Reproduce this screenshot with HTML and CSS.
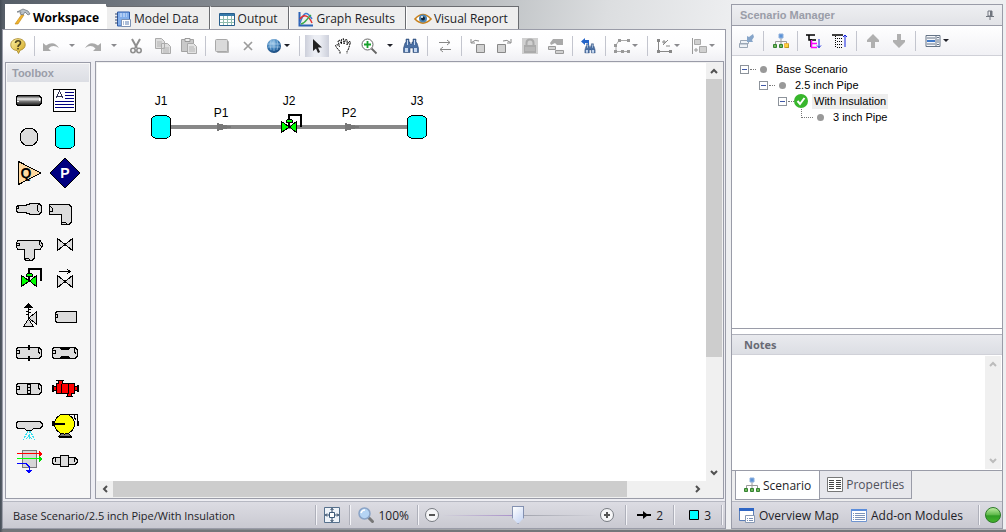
FILE: index.html
```html
<!DOCTYPE html>
<html lang="en">
<head>
<meta charset="utf-8">
<title>Workspace</title>
<link rel="stylesheet" href="styles.css">
</head>
<body>
<svg class="defs" width="0" height="0" aria-hidden="true">
  <defs>
    <linearGradient id="gPipe" x1="0" y1="0" x2="0" y2="1"><stop offset="0" stop-color="#222"/><stop offset=".35" stop-color="#eee"/><stop offset=".6" stop-color="#777"/><stop offset="1" stop-color="#111"/></linearGradient>
    <linearGradient id="gGold" x1="0" y1="0" x2="1" y2="1"><stop offset="0" stop-color="#fdf3a4"/><stop offset="1" stop-color="#d0a41c"/></linearGradient>
    <radialGradient id="gGlobe" cx=".4" cy=".3" r=".8"><stop offset="0" stop-color="#a8d0ee"/><stop offset=".5" stop-color="#3b7db8"/><stop offset="1" stop-color="#0d3768"/></radialGradient>
    <linearGradient id="gGreen" x1="0" y1="0" x2="0" y2="1"><stop offset="0" stop-color="#c4efa8"/><stop offset=".5" stop-color="#5cb848"/><stop offset=".55" stop-color="#2f9c24"/><stop offset="1" stop-color="#46b52e"/></linearGradient>
    <symbol id="bino" viewBox="0 0 16 16"><path d="M3 1h3v3h1v2h2V4h1V1h3v3l1 1 1.500 5v4.500h-5.500V10h-3v4.500H0.500V10L2 5l1-1z" fill="#4a6fa3" stroke="#1d3a66" stroke-width=".5"/><path d="M2 10h3v4H2zM11 10h3v4h-3zM4 2h1v5H4zM11 2h1v5h-1z" fill="#c6d8f0"/></symbol>
    <symbol id="cvalve" viewBox="0 0 30 30"><path d="M7.500 10.500v11l8-5.500zM22.500 10.500v11l-7-5.500z" fill="#0f0" stroke="#000"/><path d="M15 16V10" stroke="#000" stroke-width="2" fill="none"/><path d="M12.500 11.500v-2l1-1h4l1 1v2z" fill="#0f0" stroke="#000"/><path d="M15 8V4h12v12" fill="none" stroke="#000" stroke-width="2"/></symbol>
    <symbol id="tree" viewBox="0 0 16 16"><path d="M8 5v3M2.500 11V8.500h11V11M8 8v3" fill="none" stroke="#9a9a9a"/><path d="M6 1h4v4H6z" fill="#5c93d8" stroke="#8eb0dc"/><path d="M.5 11.500h3v3h-3zM6.500 11.500h3v3h-3zM12.500 11.500h3v3h-3z" fill="#74b85c" stroke="#348232"/></symbol>
  </defs>
</svg>
<div class="app">
  <main class="workspace">
    <nav class="tabs">
      <button class="tab active"><svg width="16" height="16" viewBox="0 0 16 16"><path d="M1 15L8 5l2 1L4 15z" fill="#f3b42c" stroke="#b98213" stroke-width=".6"/><path d="M3 3l6-3 5 2 2 3-2 1-3-3-2 3-3-1 1-2z" fill="#b8c0c8" stroke="#666e76" stroke-width=".7"/></svg>Workspace</button>
      <button class="tab"><svg width="16" height="16" viewBox="0 0 16 16"><path d="M2.500 1h12v14h-12z" fill="#82aeea" stroke="#2d5ba8"/><path d="M5 3h7M5 5h7" stroke="#dcebff" stroke-dasharray="2 1"/><path d="M0 3h3M0 6h3M0 9h3M0 12h3" stroke="#344a72"/><path d="M6.500 8.500h9v7h-9z" fill="#fff" stroke="#7c92b4"/><path d="M8 11h6M8 13h6" stroke="#5b7cb0" stroke-dasharray="1 1 5"/></svg>Model Data</button>
      <button class="tab"><svg width="16" height="16" viewBox="0 0 16 16"><path d="M.5 2.500h15v12H.5z" fill="#fff" stroke="#275e8c"/><path d="M1 3h14v2H1z" fill="#377aaa"/><path d="M1 8.500h14M1 11.500h14M4.500 5v9M8.500 5v9M12.500 5v9" stroke="#8fbcae" fill="none"/></svg>Output</button>
      <button class="tab"><svg width="16" height="16" viewBox="0 0 16 16"><path d="M1.500 1v13.500H15" fill="none" stroke="#2c63b6" stroke-width="2"/><path d="M2 12C6 0 9 0 14 8" fill="none" stroke="#3e79cf" stroke-width="1.500"/><path d="M2 8c4-6 9-3 12 4" fill="none" stroke="#e03030" stroke-width="1.500"/><path d="M3 13C8 12 9 7 13 4" fill="none" stroke="#38aa48" stroke-width="1.500"/></svg>Graph Results</button>
      <button class="tab"><svg width="16" height="16" viewBox="0 0 16 16"><path d="M0 8q8-9 16 0-8 8-16 0z" fill="#fff" stroke="#c8811c" stroke-width="1.700"/><circle cx="8" cy="7.500" r="4" fill="#4c85b4"/><circle cx="8" cy="7.500" r="2" fill="#102438"/><circle cx="7" cy="6" r="1" fill="#fff"/></svg>Visual Report</button>
    </nav>
    <section class="frame">
      <div class="toolbar">
        <button class="tool" aria-label="Help"><svg viewBox="0 0 16 16"><path d="M8 .7c4 0 7.200 2.500 7.200 6 0 3-2.400 5-5 5.500L8.500 15.500 7 12.500C3 12.200.8 9.800.8 6.700c0-3.500 3.200-6 7.200-6z" fill="url(#gGold)" stroke="#b4963c"/><path d="M5.500 5c.3-3 5-3 5 0C10.500 7 8 6.500 8 9M8 10v1.500" fill="none" stroke="#4e4520" stroke-width="1.600"/></svg></button>
        <span class="sep"></span>
        <button class="tool" aria-label="Undo"><svg viewBox="0 0 16 16"><path d="M0 5v8h8L5.500 10.500Q10 6 16 10 11 2 3 7.500z" fill="#a9a9a9"/></svg></button>
        <button class="caret wide off" aria-label="Undo list"></button>
        <button class="tool" aria-label="Redo"><svg viewBox="0 0 16 16"><path d="M16 5v8H8l2.500-2.500Q6 6 0 10 5 2 13 7.500z" fill="#a9a9a9"/></svg></button>
        <button class="caret wide off" aria-label="Redo list"></button>
        <button class="tool gapped" aria-label="Cut"><svg viewBox="0 0 16 16"><path d="M4 1l5 9M12 1L7 10" stroke="#8f8f8f" stroke-width="2"/><circle cx="5" cy="12.500" r="2.200" fill="none" stroke="#8f8f8f" stroke-width="1.600"/><circle cx="11" cy="12.500" r="2.200" fill="none" stroke="#8f8f8f" stroke-width="1.600"/></svg></button>
        <button class="tool gapped" aria-label="Copy"><svg viewBox="0 0 16 16"><path d="M.5.500h6l3 3v7h-9zM6.500 5.500h6l3 3v7h-9z" fill="#dedede" stroke="#aaa"/><path d="M2 4h5M2 6h4M2 8h4M8 10h6M8 12h6M8 14h6" stroke="#b4b4b4"/></svg></button>
        <button class="tool" aria-label="Paste"><svg viewBox="0 0 16 16"><path d="M.5 1.500h12v12H.5z" fill="#c9c9c9" stroke="#a3a3a3"/><path d="M4 .500h5v3H4z" fill="#eee" stroke="#999"/><path d="M6.500 5.500h6l3 3v7h-9z" fill="#e3e3e3" stroke="#aaa"/><path d="M8 9h5M8 11h6M8 13h6" stroke="#b4b4b4"/></svg></button>
        <span class="sep"></span>
        <button class="tool" aria-label="Duplicate"><svg viewBox="0 0 16 16"><rect x="3" y="3" width="12" height="12" rx="1" fill="#b8b8b8"/><rect x="1.500" y="1.500" width="12" height="12" rx="1" fill="#dadada" stroke="#a8a8a8"/></svg></button>
        <button class="tool" aria-label="Delete"><svg viewBox="0 0 16 16"><path d="M4 4l8 8M12 4l-8 8" stroke="#9b9b9b" stroke-width="1.700"/></svg></button>
        <button class="tool" aria-label="Global edit"><svg viewBox="0 0 16 16"><circle cx="8" cy="8" r="7" fill="url(#gGlobe)"/><path d="M2 6h12M2 9h12M8 1v12M5 2q-2 5 0 10M11 2q2 5 0 10" fill="none" stroke="#b5d4ed" stroke-width=".6"/></svg></button>
        <button class="caret" aria-label="Global edit list"></button>
        <span class="sep"></span>
        <button class="tool on gapped" aria-label="Select"><svg viewBox="0 0 16 16"><path d="M4 1v12l3-2.500 2 4.500 2-1-2-4.500h4z" fill="#222"/></svg></button>
        <button class="tool" aria-label="Pan"><svg viewBox="0 0 16 16"><path d="M5 15.500v-2L1.500 9.500.5 7.500l1.500-1 2.500 2L3 3l1.500-1L6.500 6V1.500L8.500.700 9 6l1.500-4.500 1.700.5L12 7l2-3.500 1.500.5-2 7-1.500 2.500v2" fill="#fff" stroke="#000" stroke-dasharray="2 .7"/></svg></button>
        <button class="tool" aria-label="Zoom"><svg viewBox="0 0 16 16"><path d="M10.500 10.500l5 5" stroke="#666" stroke-width="1.800"/><circle cx="6.500" cy="6.500" r="5.500" fill="#fff" stroke="#666"/><path d="M3 6.500h7M6.500 3v7" stroke="#18a02c" stroke-width="1.800"/></svg></button>
        <button class="caret wide" aria-label="Zoom list"></button>
        <button class="tool" aria-label="Find"><svg><use href="#bino"/></svg></button>
        <span class="sep"></span>
        <button class="tool gapped" aria-label="Reverse direction"><svg viewBox="0 0 16 16"><path d="M2 4.500h11M10 2l3 2.500-3 2.500M14 11.500H3M6 9l-3 2.500 3 2.500" fill="none" stroke="#888"/></svg></button>
        <span class="sep"></span>
        <button class="tool" aria-label="Rotate left"><svg viewBox="0 0 16 16"><path d="M6.500 6.500h8v8h-8z" fill="#d2d2d2" stroke="#888"/><path d="M1 1v4h4M1.500 4.500Q5 1 9 3" fill="none" stroke="#888"/></svg></button>
        <button class="tool" aria-label="Rotate right"><svg viewBox="0 0 16 16"><path d="M1.500 6.500h8v8h-8z" fill="#d2d2d2" stroke="#888"/><path d="M15 1v4h-4M14.500 4.500Q11 1 7 3" fill="none" stroke="#888"/></svg></button>
        <button class="tool" aria-label="Lock"><svg viewBox="0 0 16 16"><path d="M0 0h16v16H0z" fill="#d0d0d0"/><path d="M4.500 8V5q0-3.500 3.500-3.500T11.500 5v3" fill="none" stroke="#aaa" stroke-width="2"/><path d="M2 7h12v8H2z" fill="#aaa"/><path d="M3 10h10M3 12h10" stroke="#c4c4c4"/></svg></button>
        <button class="tool" aria-label="Layer"><svg viewBox="0 0 16 16"><path d="M2 5l3-4h10v6h-6l-2-2-4 2z" fill="#a9a9a9"/><path d="M.5 8.500h7v3h-7zM7.500 12.500h8v3h-8z" fill="#d2d2d2" stroke="#999"/></svg></button>
        <span class="sep"></span>
        <button class="tool" aria-label="Find next"><svg viewBox="0 0 16 16"><use href="#bino" x="3" y="5" width="12" height="11"/><path d="M0 3.500L4 0v2h4v5H7V5H4v2z" fill="#2464c8"/></svg></button>
        <span class="sep"></span>
        <button class="tool" aria-label="Pipe shape"><svg viewBox="0 0 16 16"><path d="M15 2.500H5L2 7v6.500h13" fill="none" stroke="#aaa" /><path d="M4 1h3v3H4zM13 1h3v3h-3zM0 6h3v3H0zM0 12h3v3H0zM7 12h3v3H7zM13 12h3v3h-3z" fill="#999"/></svg></button>
        <button class="caret off" aria-label="Pipe shape list"></button>
        <span class="sep"></span>
        <button class="tool" aria-label="Scale"><svg viewBox="0 0 16 16"><path d="M2.500 2v11.500H14M7 7l5-5M8 2v4M6 4h4M10 8h4" fill="none" stroke="#888"/><path d="M1 1h3v3H1zM1 12h3v3H1zM13 12h3v3h-3z" fill="#888"/></svg></button>
        <button class="caret off" aria-label="Scale list"></button>
        <button class="tool" aria-label="Align"><svg viewBox="0 0 16 16"><path d="M1.500 0v16M3 12h4M5 10v4" stroke="#999"/><path d="M3.500 1.500h6v5h-6zM8.500 8.500h7v6h-7z" fill="#d0d0d0" stroke="#aaa"/></svg></button>
        <button class="caret off" aria-label="Align list"></button>
      </div>
      <div class="work">
        <aside class="toolbox">
          <h2 class="panel-title">Toolbox</h2>
          <div class="palette">
            <button aria-label="Pipe"><svg viewBox="0 0 30 30"><path d="M4 10.500h21l2 2v6l-2 2H4l-2-2v-6z" fill="url(#gPipe)" stroke="#000"/><path d="M3 16h2M25 13v3" stroke="#fff"/></svg></button>
            <button aria-label="Annotation"><svg viewBox="0 0 30 30"><path d="M3.500 4.500h22v22h-22z" fill="#fff" stroke="#000"/><path d="M15 7.500h9M15 10.500h9M15 13.500h9M5 16.500h19M5 19.500h19M5 22.500h19" stroke="#000080"/><path d="M6 13L9.500 6 13 13M7 11h5" fill="none" stroke="#335"/></svg></button>
            <button aria-label="Branch"><svg viewBox="0 0 30 30"><circle cx="15" cy="16" r="9" fill="#dcdcdc" stroke="#000"/></svg></button>
            <button aria-label="Reservoir"><svg viewBox="0 0 30 30"><path d="M5.500 7.500l2-2 3-1h9l3 1 2 2v17l-2 2-3 1h-9l-3-1-2-2z" fill="#0ff" stroke="#000"/></svg></button>
            <button aria-label="Assigned flow"><svg viewBox="0 0 30 30"><path d="M4.500 4.500v23L27 16z" fill="#ffd9a0" stroke="#000"/><text x="12" y="21" class="glyph">Q</text></svg></button>
            <button aria-label="Assigned pressure"><svg viewBox="0 0 30 30"><path d="M15 1l15 15-15 15L0 16z" fill="#000080" stroke="#000"/><text x="15" y="21" class="glyph light">P</text></svg></button>
            <button aria-label="Area change"><svg viewBox="0 0 30 30"><path d="M4 12.500h7l6-2h8l2 2v7l-2 2h-8l-6-2H4l-2-2v-3z" fill="#dcdcdc" stroke="#000"/><path d="M4 13v2h-2M25 11l-2 2v4l2 2" fill="none" stroke="#000"/></svg></button>
            <button aria-label="Bend"><svg viewBox="0 0 30 30"><path d="M0 11.500h19l2 2v16l-2 2h-7l-1-1v-9H0l-1-2v-6z" fill="#dcdcdc" stroke="#000"/><path d="M0 13l2 2v3h-3M11 29h4l2 2" fill="none" stroke="#000"/></svg></button>
            <button aria-label="Tee"><svg viewBox="0 0 30 30"><path d="M4 11.500h22l2 3v3l-2 3h-6v9l-2 2h-6l-2-2v-9H4l-2-3v-3z" fill="#dcdcdc" stroke="#000"/><path d="M3 14h2v2H2M26 12l-1 3 2 2M10 29h4l2 2" fill="none" stroke="#000"/></svg></button>
            <button aria-label="Valve"><svg viewBox="0 0 30 30"><path d="M7.500 9.500v12l15-12v12z" fill="#dcdcdc" stroke="#000"/></svg></button>
            <button aria-label="Control valve"><svg><use href="#cvalve"/></svg></button>
            <button aria-label="Check valve"><svg viewBox="0 0 30 30"><path d="M7.500 10.500v12l15-12v12z" fill="#dcdcdc" stroke="#000"/><path d="M9 6.500h11M17 4l3 2.500-3 2.500" fill="none" stroke="#000"/></svg></button>
            <button aria-label="Relief valve"><svg viewBox="0 0 30 30"><path d="M14.500 18l-5 7.500h10zM14.500 17l8-6v12z" fill="#dcdcdc" stroke="#000"/><path d="M14.500 18V4M12 11l5-3M12 14l5-3" fill="none" stroke="#000" /><path d="M10 7l4.500-5L19 7z"/></svg></button>
            <button aria-label="Dead end"><svg viewBox="0 0 30 30"><path d="M7 10.500h19v11H7l-2-2v-7z" fill="#dcdcdc" stroke="#000"/><path d="M5 13h2v3H5" fill="none" stroke="#000"/></svg></button>
            <button aria-label="Orifice"><svg viewBox="0 0 30 30"><path d="M4 10.500h21l2 2v7l-2 2H4l-2-2v-7z" fill="#dcdcdc" stroke="#000"/><path d="M3 13h2v3H2M25 11l-1 3 2 3" fill="none" stroke="#000"/><path d="M14 8h2v5h-2zM14 19h2v5h-2z"/></svg></button>
            <button aria-label="Venturi"><svg viewBox="0 0 30 30"><path d="M4 10.500h21l2 2v7l-2 2H4l-2-2v-7z" fill="#dcdcdc" stroke="#000"/><path d="M3 13h2v3H2M25 11l-1 3 2 3" fill="none" stroke="#000"/><path d="M8 10h13l-3 3h-7zM8 22h13l-3-3h-7z"/></svg></button>
            <button aria-label="Screen"><svg viewBox="0 0 30 30"><path d="M4 10.500h21l2 2v7l-2 2H4l-2-2v-7z" fill="#dcdcdc" stroke="#000"/><path d="M3 13h2v3H2M25 11l-1 3 2 3M13.500 10v12M16.500 10v12" fill="none" stroke="#000"/><path d="M15 11v11" stroke="#000" stroke-width="2" stroke-dasharray="1 2"/></svg></button>
            <button aria-label="Heat exchanger"><svg viewBox="0 0 30 30"><path d="M2.500 13.500h4v-3h2v-3h4v3h12v3h4v4h-4v3h-3v3h-4v-3h-11v-3h-4z" fill="#f00" stroke="#000"/><path d="M3 12v7M28 12v7" stroke="#000" stroke-width="2"/><path d="M11.500 11v10M18.500 11v10M6.500 12v8M24.500 12v8M6 7.500h8M16 23.500h7" stroke="#000"/></svg></button>
            <button aria-label="Spray discharge"><svg viewBox="0 0 30 30"><path d="M4 12.500h22l2 2v3l-2 2h-6l-3 2h-4l-3-2H4l-2-2v-3z" fill="#dcdcdc" stroke="#000"/><path d="M14 22L9 31M15 22v9M16 22l5 9M12 24l6 6M18 24l-6 6" fill="none" stroke="#35e0f0" stroke-dasharray="2 1"/></svg></button>
            <button aria-label="Pump"><svg viewBox="0 0 30 30"><path d="M9 27l3-3h6l3 3z" fill="#777" stroke="#000"/><path d="M9 27.500h13" stroke="#000" stroke-width="2"/><circle cx="14.500" cy="15" r="10" fill="#ff0" stroke="#000"/><path d="M15 5.500h12v11M24 5v3l2 3" fill="none" stroke="#000"/><path d="M2 15h13M3 12v5M28 12v5" stroke="#000" stroke-width="2"/></svg></button>
            <button aria-label="Jet pump"><svg viewBox="0 0 30 30"><path d="M8.500 5.500h14v17h-14z" fill="#d6d6d6" stroke="#777"/><path d="M3 8.500h22" stroke="#f00"/><path d="M25 6l4 3-4 3z" fill="#f00"/><path d="M3 13.500h22" stroke="#0f0"/><path d="M25 11l4 3-4 3z" fill="#0d0"/><path d="M3 18.500h9l3 3V27" fill="none" stroke="#00f"/><path d="M12 25h6l-3 4z" fill="#00f"/></svg></button>
            <button aria-label="General component"><svg viewBox="0 0 30 30"><path d="M4 12.500h21l2 2v3l-2 2H4l-2-2v-3z" fill="#dcdcdc" stroke="#000"/><path d="M10.500 10.500h8v11h-8z" fill="#dcdcdc" stroke="#000"/><path d="M5 13v4M24 13v4" stroke="#000"/></svg></button>
          </div>
        </aside>
        <div class="canvas">
          <div class="sheet">
            <svg class="diagram" width="600" height="100" viewBox="97 64 600 100">
              <path d="M171 128h246" stroke="#888" stroke-width="4"/><path d="M217 124l16 4-16 4zM345 124l16 4-16 4z" fill="#777"/>
              <g fill="#0ff" stroke="#000"><path d="M151.500 119.500l2-2 3-1h9l3 1 2 2v17l-2 2-3 1h-9l-3-1-2-2z"/><path d="M407.500 119.500l2-2 3-1h9l3 1 2 2v17l-2 2-3 1h-9l-3-1-2-2z"/></g>
              <use href="#cvalve" x="274" y="112" width="30" height="30"/>
              <g class="labels"><text x="161" y="106">J1</text><text x="221" y="118">P1</text><text x="289" y="106">J2</text><text x="349" y="118">P2</text><text x="417" y="106">J3</text></g>
            </svg>
          </div>
          <div class="vbar"><button aria-label="Up"><svg viewBox="0 0 8 8"><path d="M1 6l3-3 3 3"/></svg></button><div class="track"><i class="thumb"></i></div><button aria-label="Down"><svg viewBox="0 0 8 8"><path d="M1 2l3 3 3-3"/></svg></button></div>
          <div class="hbar"><button aria-label="Left"><svg viewBox="0 0 8 8"><path d="M6 1L3 4l3 3"/></svg></button><div class="track"><i class="thumb"></i></div><button aria-label="Right"><svg viewBox="0 0 8 8"><path d="M2 1l3 3-3 3"/></svg></button></div>
        </div>
      </div>
      <footer class="status">
        <span class="path">Base Scenario/2.5 inch Pipe/With Insulation</span>
        <span class="sep"></span>
        <button class="fit" aria-label="Fit to window"><svg width="16" height="16" viewBox="0 0 16 16"><path d="M.5.500h15v15H.5z" fill="#eef3f9" stroke="#56708c"/><path d="M5.500 5.500h5v5h-5z" fill="#fff" stroke="#3c5a7a"/><path d="M8 1v4M8 11v4M1 8h4M11 8h4M6.500 3L8 1.500 9.500 3M6.500 13L8 14.500 9.500 13M3 6.500L1.500 8 3 9.500M13 6.500L14.500 8 13 9.500" fill="none" stroke="#2c4562"/></svg></button>
        <span class="sep"></span>
        <button class="zoomval"><svg width="16" height="16" viewBox="0 0 16 16"><path d="M10 10l4.500 4.500" stroke="#777" stroke-width="3" stroke-linecap="round"/><circle cx="6.500" cy="6.500" r="5.500" fill="#b5d4f4" stroke="#8aa3c6" stroke-width="1.500"/><path d="M3 6q1-3 4-3" fill="none" stroke="#fff" stroke-width="1.500"/></svg>100%</button>
        <span class="sep"></span>
        <div class="zoomer">
          <button class="round" aria-label="Zoom out"><svg width="14" height="14" viewBox="0 0 14 14"><circle cx="7" cy="7" r="6.500" fill="#f6f6f8" stroke="#777b82"/><path d="M4 7h6" stroke="#555" stroke-width="2"/></svg></button>
          <input class="slider" type="range" min="0" max="100" value="49" aria-label="Zoom level">
          <button class="round" aria-label="Zoom in"><svg width="14" height="14" viewBox="0 0 14 14"><circle cx="7" cy="7" r="6.500" fill="#f6f6f8" stroke="#777b82"/><path d="M4 7h6M7 4v6" stroke="#555" stroke-width="2"/></svg></button>
        </div>
        <span class="sep"></span>
        <span class="count"><svg width="14" height="10" viewBox="0 0 14 10"><path d="M0 5h14" stroke="#000" stroke-width="2"/><path d="M6 1l5 4-5 4z"/></svg>2</span>
        <span class="sep"></span>
        <span class="count"><svg width="10" height="10" viewBox="0 0 10 10"><path d="M.5.500h9v9h-9z" fill="#0ff" stroke="#000"/></svg>3</span>
        <span class="sep"></span>
      </footer>
    </section>
  </main>
  <aside class="manager">
    <header class="panel-title head">Scenario Manager<button class="pin" aria-label="Pin"><svg width="8" height="10" viewBox="0 0 8 10"><path d="M2 1h4v5H2zM0 6.500h8M4 7v3" fill="none" stroke="#70757e"/><path d="M4 1h2v5H4z" fill="#70757e"/></svg></button></header>
    <div class="mtools">
      <button class="tool" aria-label="Jump"><svg viewBox="0 0 16 16"><path d="M1.500 7.500h8v3h-8zM.5 10.500h8v4h-8z" fill="#eef2f7" stroke="#9aa6b5"/><path d="M1 11h7" stroke="#9aa6b5"/><path d="M14 1l-4 3-2-1v6h6l-1-2 2-3z" fill="#86a5c9"/></svg></button>
      <span class="sep"></span>
      <button class="tool gapped" aria-label="New scenario"><svg viewBox="0 0 16 16"><use href="#tree" width="16" height="16"/><path d="M11.500 10.500h4v4h-4z" fill="#ffd23c" stroke="#e48a10" stroke-dasharray="1 1"/></svg></button>
      <span class="sep"></span>
      <button class="tool" aria-label="Expand all"><svg viewBox="0 0 16 16"><path d="M0 2h9M3 2v5h7M5 6v8" stroke="#000" fill="none" stroke-width="1.500"/><path d="M5.500 7v7.500H11M5.500 10.500H11" stroke="#f0f" fill="none" stroke-width="1.500"/><path d="M13 6v9M11 12.500l2 2 2-2" stroke="#1020e0" fill="none"/></svg></button>
      <button class="tool" aria-label="Collapse all"><svg viewBox="0 0 16 16"><path d="M0 2h11" stroke="#000" stroke-width="1.500"/><path d="M3.500 3v11M3 5.500h8M5 8.500h6M5 11.500h6M5 14.500h6" stroke="#000" stroke-dasharray="1 1" fill="none"/><path d="M13 2v12M11 4l2-2 2 2" stroke="#1020e0" fill="none"/></svg></button>
      <span class="sep"></span>
      <button class="tool" aria-label="Move up"><svg viewBox="0 0 16 16"><path d="M8 1l6 6v2h-4v6H6V9H2V7z" fill="#b0b0b0"/></svg></button>
      <button class="tool" aria-label="Move down"><svg viewBox="0 0 16 16"><path d="M8 15l6-6V7h-4V1H6v6H2v2z" fill="#b0b0b0"/></svg></button>
      <span class="sep"></span>
      <button class="tool gapped" aria-label="Options"><svg viewBox="0 0 16 16"><path d="M1 2.500h14v11H1z" fill="#f5f7fb" stroke="#667486"/><path d="M11 3v10M2 5h8M2 11h8M12 4.500h2M12 7h2M12 9h2M12 11.500h2" stroke="#667486"/><path d="M2 7h8v2H2z" fill="#3f78c9"/></svg></button>
      <button class="caret" aria-label="Options list"></button>
    </div>
    <ul class="tree">
      <li class="node d0"><button class="exp" aria-label="Collapse"></button><i class="dots"></i><b class="bullet"></b><span>Base Scenario</span></li>
      <li class="node d1"><button class="exp" aria-label="Collapse"></button><i class="dots"></i><b class="bullet"></b><span>2.5 inch Pipe</span></li>
      <li class="node d2"><button class="exp" aria-label="Collapse"></button><i class="dots"></i><svg class="check" viewBox="0 0 14 14"><circle cx="7" cy="7" r="7" fill="#38b62c"/><path d="M3.500 7l2.500 3 4.500-6" fill="none" stroke="#fff" stroke-width="2"/></svg><span class="selected">With Insulation</span></li>
      <li class="node d3"><i class="dots elbow"></i><b class="bullet"></b><span>3 inch Pipe</span></li>
    </ul>
    <h2 class="panel-title notes-title"><label for="notes">Notes</label></h2>
    <div class="notes"><textarea id="notes"></textarea>
      <div class="vbar pale"><button aria-label="Up"><svg viewBox="0 0 8 8"><path d="M1 6l3-3 3 3"/></svg></button><div class="track"></div><button aria-label="Down"><svg viewBox="0 0 8 8"><path d="M1 2l3 3 3-3"/></svg></button></div>
    </div>
    <nav class="mtabs">
      <button class="mtab active"><svg width="16" height="16"><use href="#tree"/></svg>Scenario</button>
      <button class="mtab"><svg width="16" height="16" viewBox="0 0 16 16"><path d="M.5.500h15v14H.5z" fill="#fff" stroke="#777"/><path d="M2 3.500h5M2 5.500h5M2 7.500h5M2 9.500h5M2 11.500h5M9 3.500h5M9 5.500h5M9 7.500h5M9 9.500h5M9 11.500h5" stroke="#444"/></svg>Properties</button>
    </nav>
    <footer class="mstatus">
      <button><svg width="16" height="16" viewBox="0 0 16 16"><path d="M.5 1.500h14v12H.5z" fill="#fff" stroke="#5c7fb8"/><path d="M0 1h15v3H0z" fill="#2f66c4"/><path d="M6.500 8.500h9v7h-9z" fill="#fff" stroke="#8899b4"/><path d="M8 11.500h6M8 13.500h6" stroke="#7a8fb4" stroke-dasharray="1 1 5"/></svg>Overview Map</button>
      <button><svg width="16" height="16" viewBox="0 0 16 16"><path d="M.5 2.500h15v12H.5z" fill="#fff" stroke="#6f94d0"/><path d="M0 2h16v2H0z" fill="#5b8ddb"/><path d="M2 6.500h12M2 8.500h12M2 10.500h12M2 12.500h12" stroke="#7c93b8" stroke-dasharray="1 1 10"/></svg>Add-on Modules</button>
      <span class="sep"></span>
      <svg class="lamp" width="16" height="16" viewBox="0 0 16 16"><circle cx="8" cy="8" r="7.500" fill="url(#gGreen)" stroke="#2c7a28"/></svg>
    </footer>
  </aside>
</div>
</body>
</html>
```
FILE: styles.css
```css
* { box-sizing: border-box; }
body { margin: 0; font: 12px "Open Sans", "Noto Sans", sans-serif; color: #1e1e28; }
button { font: inherit; color: inherit; border: 0; padding: 0; margin: 0; background: none; }
svg { overflow: visible; flex: none; display: block; }
.defs { position: absolute; }

.app {
  display: flex; gap: 5px; min-height: 100vh; padding: 4px 3px 3px 2px;
  background:
    linear-gradient(90deg, #444c56, transparent 3px),
    linear-gradient(0deg, #74767a 2px, transparent 3px),
    linear-gradient(100deg, #555d67 0, #80868d 200px, #b4b8bb 450px, #dcdee0 600px, #eeeff1 730px);
}

/* Main area */
.workspace { flex: 1; min-width: 0; display: flex; flex-direction: column; }
.tabs { display: flex; align-items: flex-end; height: 25px; padding-left: 3px; }
.tab {
  display: flex; align-items: center; gap: 3px; height: 23px; padding: 1px 10px 0 8px;
  background: #eeeeee; border: 1px solid #6a6c70; border-bottom: 0; border-left-color: #fff; font-size: 12px; white-space: nowrap;
}
.tab.active { height: 25px; background: #fff; font-weight: 700; color: #000; border-color: #fff; padding: 0 6px 0 8px; }
.frame { flex: 1; display: flex; flex-direction: column; min-height: 0; background: #eeeef3; border: 1px solid #9a9ca8; }
.toolbar { display: flex; align-items: center; height: 31px; padding-left: 2px; background: linear-gradient(#fff, #fdfdfe 50%, #f0f0f4); }
.tool { width: 26px; height: 24px; display: flex; align-items: center; justify-content: center; flex: none; }
.tool svg { width: 16px; height: 16px; }
.tool.on { background: linear-gradient(90deg, #c9ccd8, #eceef4 40%, #eceef4 60%, #c9ccd8); background-clip: content-box; padding: 1px; }
.gapped { margin-left: 1px; }
.sep { flex: none; width: 7px; height: 20px; background: linear-gradient(90deg, transparent 3px, #c3c5ce 3px, #c3c5ce 4px, transparent 4px); }
.caret { width: 9px; height: 20px; margin: 0 3px 0 -3px; display: flex; align-items: center; flex: none; }
.caret::after { content: ""; border: 3px solid transparent; border-top-color: #1f2028; border-bottom: 0; }
.caret.off::after { border-top-color: #8a8a8e; }
.caret.wide { width: 16px; margin: 0; justify-content: center; }

.work { flex: 1; display: flex; gap: 4px; padding: 0 1px 0 2px; min-height: 0; }
.toolbox { width: 86px; flex: none; margin-top: 1px; background: #f7f7f7; border: 1px solid #9a9ca8; display: flex; flex-direction: column; }
.panel-title { margin: 0; font-size: 11px; font-weight: 700; color: #9a9da8; background: linear-gradient(#e9eaee, #dcdee4); }
.toolbox .panel-title { height: 18px; line-height: 18px; padding-left: 5px; margin: 1px 1px 0; font-family: "Liberation Sans", sans-serif; }
.palette { display: grid; grid-template-columns: repeat(2, 36px); grid-auto-rows: 36px; padding-left: 5px; }
.palette button { display: grid; place-items: center; }
.palette svg { width: 30px; height: 30px; shape-rendering: crispEdges; }
.glyph { font: 700 14px "Liberation Sans", sans-serif; text-anchor: middle; }
.light { fill: #fff; }

.canvas {
  flex: 1; min-width: 0; display: grid; grid-template: 1fr 16px / 1fr 16px;
  background: #f0f0f0; border: 1px solid #9a9ca8; padding: 1px;
}
.sheet { background: #fff; overflow: hidden; min-width: 0; }
.diagram { shape-rendering: crispEdges; }
.labels { font: 12px "Liberation Sans", sans-serif; text-anchor: middle; fill: #000; }
.vbar, .hbar { display: flex; background: #f0f0f0; }
.vbar { flex-direction: column; }
.vbar button, .hbar button { flex: none; width: 16px; height: 16px; display: grid; place-items: center; }
.vbar svg, .hbar svg { width: 8px; height: 8px; fill: none; stroke: #505050; stroke-width: 2; }
.vbar.pale svg { stroke: #bcbcbc; }
.track { flex: 1; display: flex; }
.vbar .track { flex-direction: column; }
.thumb { background: #cdcdcd; }
.vbar .thumb { height: 72%; }
.hbar .thumb { width: 89%; }

.status, .mstatus { display: flex; align-items: center; background: linear-gradient(#dcdce3, #c9c9d1); border-top: 1px solid #b6b8c2; flex: none; }
.status { height: 27px; margin-top: 2px; }
.status .path { flex: 1; padding-left: 10px; font-size: 11px; white-space: nowrap; }
.status .sep, .mstatus .sep { background: linear-gradient(90deg, transparent 3px, #aeb0ba 3px, #aeb0ba 4px, #f4f4f8 4px, #f4f4f8 5px, transparent 5px); }
.fit { padding: 0 6px 0 5px; }
.zoomval { display: flex; align-items: center; gap: 4px; padding: 0 5px; font-size: 12px; }
.zoomer { display: flex; align-items: center; padding: 0 8px 0 4px; gap: 3px; }
.slider { appearance: none; width: 155px; height: 18px; margin: 0; background: linear-gradient(90deg, transparent, #a68cc8 50%, #a0a2ac 50%, transparent) center / 100% 1px no-repeat; }
.slider::-webkit-slider-thumb {
  appearance: none; width: 12px; height: 18px;
  clip-path: polygon(0 0, 100% 0, 100% 65%, 50% 100%, 0 65%);
  background: linear-gradient(135deg, #fff, #c3d3f3); border: 1px solid #8390b0;
}
.count { display: flex; align-items: center; justify-content: flex-end; gap: 5px; width: 41px; padding-right: 7px; font-size: 12px; }

/* Scenario manager */
.manager { width: 272px; flex: none; display: flex; flex-direction: column; min-height: 0; background: #fff; border: 1px solid #9a9ca8; }
.head { display: flex; align-items: center; height: 21px; padding: 0 8px; border-bottom: 1px solid #9a9ca8; font-family: "Liberation Sans", sans-serif; background: linear-gradient(#eeeff2, #e2e3e7); flex: none; }
.pin { margin-left: auto; }
.mtools { display: flex; align-items: center; height: 30px; padding-left: 2px; background: linear-gradient(#fff, #f1f1f5); border-bottom: 1px solid #d0d1d8; flex: none; }
.tree { flex: 1; list-style: none; margin: 0; padding: 5px 0 0 8px; border-bottom: 1px solid #9a9ca8; font: 11px "Liberation Sans", sans-serif; color: #000; }
.node { display: flex; align-items: center; height: 16px; }
.d1 { padding-left: 19px; }
.d2 { padding-left: 38px; }
.d3 { padding-left: 61px; }
.exp { width: 9px; height: 9px; border: 1px solid #8d939b; background: linear-gradient(#4059a8, #4059a8) center / 5px 1px no-repeat #fff; flex: none; }
.dots { width: 6px; border-top: 1px dotted #777; margin-left: 1px; }
.bullet { width: 7px; height: 7px; border-radius: 50%; background: #999; margin: 0 7px 0 4px; }
.node span { padding: 0 2px; line-height: 15px; white-space: nowrap; }
.node .selected { background: #eeeeee; }
.check { width: 14px; height: 14px; margin: 0 4px 0 0; }
.d3 .elbow { width: 12px; height: 9px; margin: -8px 0 0; border: 1px dotted #777; border-width: 0 0 1px 1px; }
.notes-title { margin-top: 5px; height: 21px; line-height: 20px; padding-left: 12px; border-top: 1px solid #b0b2bc; border-bottom: 1px solid #d0d1d8; color: #686a74; flex: none; }
.notes { display: flex; height: 115px; padding: 1px; flex: none; }
.notes textarea { flex: 1; min-width: 0; border: 0; padding: 4px; resize: none; background: #fff; }
.mtabs { display: flex; align-items: flex-start; height: 31px; padding-left: 3px; background: #eeeeef; border-top: 1px solid #9a9ca8; flex: none; }
.mtab { display: flex; align-items: center; gap: 3px; height: 28px; padding: 0 7px; border: 1px solid #9a9ca8; border-top: 0; border-left: 0; background: #e7e7ec; color: #50525c; font-size: 12px; white-space: nowrap; }
.mtab.active { height: 29px; background: #fff; color: #1e1e28; border-left: 1px solid #9a9ca8; padding: 0 8px; }
.mstatus { height: 27px; padding-left: 7px; }
.mstatus button { display: flex; align-items: center; gap: 4px; margin-right: auto; font-size: 12px; white-space: nowrap; }
.lamp { margin: 0 1px 0 3px; }
```
